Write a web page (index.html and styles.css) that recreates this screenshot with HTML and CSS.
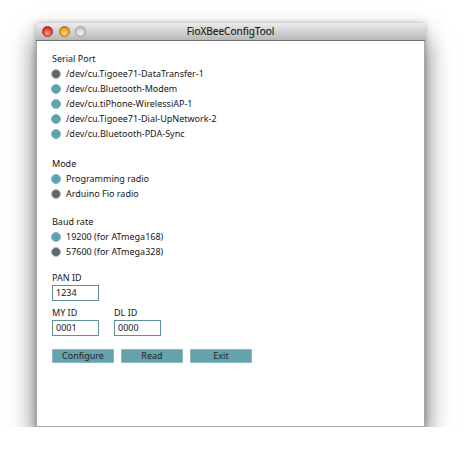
FILE: index.html
```html
<!DOCTYPE html>
<html>
<head>
<meta charset="utf-8">
<link rel="stylesheet" href="styles.css">
</head>
<body>
<div class="window">
  <div class="titlebar">
    <div class="lights">
      <span class="light red"></span>
      <span class="light orange"></span>
      <span class="light gray"></span>
    </div>
    <div class="title">FioXBeeConfigTool</div>
  </div>
  <div class="content">
    <div class="group g1">
      <div class="label">Serial Port</div>
      <div class="row"><span class="radio on"></span>/dev/cu.Tigoee71-DataTransfer-1</div>
      <div class="row"><span class="radio"></span>/dev/cu.Bluetooth-Modem</div>
      <div class="row"><span class="radio"></span>/dev/cu.tiPhone-WirelessiAP-1</div>
      <div class="row"><span class="radio"></span>/dev/cu.Tigoee71-Dial-UpNetwork-2</div>
      <div class="row"><span class="radio"></span>/dev/cu.Bluetooth-PDA-Sync</div>
    </div>
    <div class="group g2">
      <div class="label">Mode</div>
      <div class="row"><span class="radio"></span>Programming radio</div>
      <div class="row"><span class="radio on"></span>Arduino Fio radio</div>
    </div>
    <div class="group g3">
      <div class="label">Baud rate</div>
      <div class="row"><span class="radio"></span>19200 (for ATmega168)</div>
      <div class="row"><span class="radio on"></span>57600 (for ATmega328)</div>
    </div>
    <div class="field">
      <div class="label">PAN ID</div>
      <div class="input">1234</div>
    </div>
    <div class="fields">
      <div class="field">
        <div class="label">MY ID</div>
        <div class="input">0001</div>
      </div>
      <div class="field">
        <div class="label">DL ID</div>
        <div class="input">0000</div>
      </div>
    </div>
    <div class="buttons">
      <div class="btn">Configure</div>
      <div class="btn">Read</div>
      <div class="btn">Exit</div>
    </div>
  </div>
</div>
</body>
</html>
```

FILE: styles.css
```css
html, body {
  margin: 0;
  padding: 0;
  background: #ffffff;
}
body {
  padding: 23px 0 0 36px;
  font-family: "Noto Sans", "DejaVu Sans", sans-serif;
  color: #161616;
}
.window {
  width: 387px;
  height: 403px;
  border: 1px solid #a9a9a9;
  border-top: none;
  background: #fff;
  box-shadow: 0 14px 24px rgba(0, 0, 0, 0.6), 0 0 5px rgba(0, 0, 0, 0.25);
  display: flex;
  flex-direction: column;
}
.titlebar {
  height: 17px;
  border-bottom: 1px solid #6f6f6f;
  background: linear-gradient(#ececec, #d2d2d2 50%, #b8b8b8);
  margin: 0 -1px;
  display: flex;
  align-items: center;
  position: relative;
}
.lights {
  display: flex;
  gap: 5.5px;
  padding-left: 6px;
}
.light {
  width: 11px;
  height: 11px;
  border-radius: 50%;
  display: block;
  box-sizing: border-box;
}
.red {
  background: radial-gradient(circle at 50% 70%, #ff9d8f 0, #e8413a 55%, #a8201c 100%);
  border: 1px solid #9b2a24;
}
.orange {
  background: radial-gradient(circle at 50% 70%, #ffe27a 0, #f0a524 55%, #b36a10 100%);
  border: 1px solid #a8731e;
}
.gray {
  background: radial-gradient(circle at 50% 70%, #f0f0f0 0, #cfcfcf 60%, #a9a9a9 100%);
  border: 1px solid #a0a0a0;
}
.title {
  position: absolute;
  left: 0;
  right: 0;
  top: 0;
  line-height: 17px;
  text-align: center;
  font-size: 10px;
  color: #1a1a1a;
  -webkit-text-stroke: 0.15px #1a1a1a;
  pointer-events: none;
}
.content {
  padding: 10px 0 0 15px;
  font-size: 9px;
  line-height: 15px;
}
.label {
  line-height: 15px;
}
.row {
  display: flex;
  align-items: center;
  height: 15px;
}
.radio {
  width: 10px;
  height: 10px;
  border-radius: 50%;
  box-sizing: border-box;
  background: #5ea3b2;
  border: 1px solid #7fb5c1;
  margin-right: 5px;
  margin-left: -1px;
  flex: none;
}
.radio.on {
  background: #5d6668;
  border: 1.5px solid #b7bcbd;
}
.g1 { margin-bottom: 15px; }
.g2 { margin-bottom: 13px; }
.g3 { margin-bottom: 11px; }
.input {
  width: 47px;
  height: 16px;
  box-sizing: border-box;
  border: 1px solid #5f9097;
  padding-left: 3px;
  line-height: 14px;
}
.field + .fields { margin-top: 4px; }
.fields {
  display: flex;
  gap: 15px;
}
.buttons {
  display: flex;
  gap: 7px;
  margin-top: 13px;
}
.btn {
  width: 62px;
  height: 14px;
  box-sizing: border-box;
  background: #65a2ac;
  border: 1px solid #8ab9c0;
  text-align: center;
  line-height: 12px;
  color: #1d2526;
}
```
